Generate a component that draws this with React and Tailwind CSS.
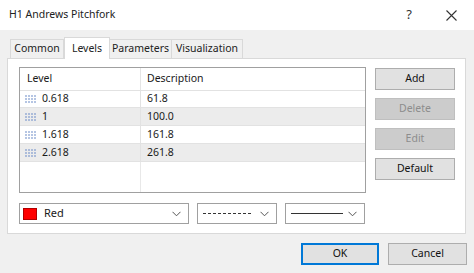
import React from "react";

const Dots = () => (
  <svg width="12" height="8" viewBox="0 0 12 8" className="shrink-0">
    {[1, 4, 7].map((y) =>
      [0, 3, 6, 9].map((x) => (
        <rect key={`${x}-${y}`} x={x} y={y - 0.5} width="2" height="1" fill="#6d8cc8" />
      ))
    )}
  </svg>
);

const Chevron = () => (
  <svg width="9" height="6" viewBox="0 0 9 6" className="shrink-0">
    <path d="M0.5 0.8 L4.5 4.8 L8.5 0.8" fill="none" stroke="#555" strokeWidth="1" />
  </svg>
);

const rows = [
  ["0.618", "61.8"],
  ["1", "100.0"],
  ["1.618", "161.8"],
  ["2.618", "261.8"],
];

function Btn({ children, disabled, primary, className = "" }) {
  return (
    <div
      className={`flex items-center justify-center h-[22px] ${
        disabled
          ? "bg-[#cccccc] border border-[#bfbfbf] text-[#8d8d8d]"
          : primary
          ? "bg-[#e1e1e1] border-2 border-[#0078d7] text-[#111]"
          : "bg-[#e1e1e1] border border-[#adadad] text-[#111]"
      } ${className}`}
    >
      {children}
    </div>
  );
}

export default function App() {
  return (
    <div className="w-[474px] h-[273px] bg-[#f0f0f0] font-['Noto_Sans',sans-serif] text-[10.5px] text-[#1a1a1a] overflow-hidden flex flex-col">
      <div className="h-[30px] bg-white flex items-center pl-[9px] shrink-0">
        <span className="text-[10.5px] text-[#222]">H1 Andrews Pitchfork</span>
        <span className="ml-auto text-[13px] text-[#333] mr-[34px]">?</span>
        <svg width="11" height="11" viewBox="0 0 11 11" className="mr-[17px]">
          <path d="M0.5 0.5 L10.5 10.5 M10.5 0.5 L0.5 10.5" stroke="#333" strokeWidth="1.1" />
        </svg>
      </div>
      <div className="pl-[7px] pt-[6px] w-[466px]">
        <div className="flex items-end pl-[3px] h-[22px] relative z-10">
          <div className="h-[19px] w-[54px] flex items-center justify-center border border-[#d9d9d9] border-b-0 bg-[#f0f0f0] text-[#222]">Common</div>
          <div className="h-[22px] w-[46px] -mb-px flex items-start pt-[3px] justify-center border border-[#d9d9d9] border-b-0 bg-white text-[#222]">Levels</div>
          <div className="h-[19px] w-[62px] flex items-center justify-center border border-[#d9d9d9] border-b-0 border-l-0 bg-[#f0f0f0] text-[#222]">Parameters</div>
          <div className="h-[19px] w-[71px] flex items-center justify-center border border-[#d9d9d9] border-b-0 border-l-0 bg-[#f0f0f0] text-[#222]">Visualization</div>
        </div>
        <div className="h-[176px] bg-white border border-[#d9d9d9] pl-[11px] pt-[8px]">
          <div className="flex gap-[9px]">
            <div className="w-[347px] h-[126px] border border-[#a0a0a0] bg-white flex flex-col">
              <div className="h-[22px] flex items-center shrink-0">
                <div className="w-[121px] pl-[7px] h-full flex items-center border-r border-[#e5e5e5]">Level</div>
                <div className="pl-[6px]">Description</div>
              </div>
              {rows.map(([a, b], i) => (
                <div
                  key={a}
                  className={`h-[18px] flex items-center shrink-0 border-b border-[#e2e2e2] ${
                    i % 2 ? "bg-[#ececec]" : "bg-white"
                  } ${i === 0 ? "border-t border-t-[#e2e2e2]" : ""}`}
                >
                  <div className="w-[121px] pl-[5px] h-full flex items-center gap-[5px] border-r border-[#e2e2e2]">
                    <Dots />
                    <span>{a}</span>
                  </div>
                  <div className="pl-[6px]">{b}</div>
                </div>
              ))}
              <div className="flex-1 flex">
                <div className="w-[121px] border-r border-[#e8e8e8]" />
              </div>
            </div>
            <div className="w-[80px] flex flex-col gap-[8px] pt-px">
              <Btn>Add</Btn>
              <Btn disabled>Delete</Btn>
              <Btn disabled>Edit</Btn>
              <Btn>Default</Btn>
            </div>
          </div>
          <div className="flex gap-[8px] mt-[10px]">
            <div className="w-[170px] h-[21px] border border-[#a0a0a0] bg-white flex items-center pl-[3px] pr-[7px]">
              <div className="w-[14px] h-[12px] bg-[#ff0000] border border-[#b00000]" />
              <span className="ml-[7px] text-[11px]">Red</span>
              <span className="ml-auto"><Chevron /></span>
            </div>
            <div className="w-[80px] h-[21px] border border-[#a0a0a0] bg-white flex items-center pl-[5px] pr-[7px]">
              <div className="w-[48px] border-t border-dashed border-[#333]" />
              <span className="ml-auto"><Chevron /></span>
            </div>
            <div className="w-[80px] h-[21px] border border-[#a0a0a0] bg-white flex items-center pl-[5px] pr-[7px]">
              <div className="w-[52px] border-t border-[#333]" />
              <span className="ml-auto"><Chevron /></span>
            </div>
          </div>
        </div>
        <div className="flex justify-end gap-[9px] mt-[9px] -mr-px">
          <Btn primary className="w-[78px] h-[21px]">OK</Btn>
          <Btn className="w-[79px] h-[21px]">Cancel</Btn>
        </div>
      </div>
    </div>
  );
}
